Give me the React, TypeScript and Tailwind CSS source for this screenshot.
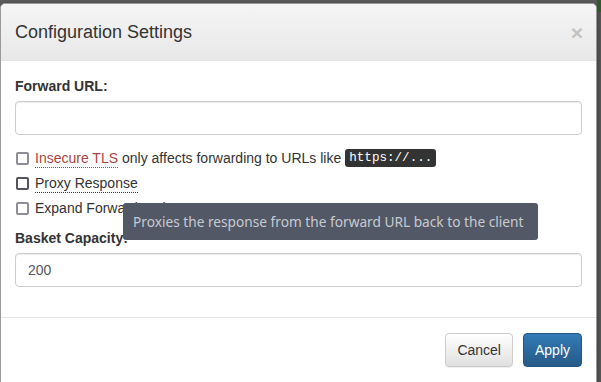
export default function App() {
  const sans = { fontFamily: '"Liberation Sans", Arial, sans-serif' };
  return (
    <div className="relative w-[601px] h-[382px] overflow-hidden bg-[#5e5e5e]" style={sans}>
      {/* backdrop bits */}
      <div className="absolute right-0 top-0 w-[4px] h-[12px] bg-[#2f5a2c]" />

      <div className="mt-[3px] w-[597px] rounded-t-[5px] border border-[#999] bg-white text-[14px] leading-[20px] text-[#333] shadow-[0_3px_9px_rgba(0,0,0,0.5)]">
        {/* header */}
        <div className="flex items-center justify-between rounded-t-[5px] border-b border-[#e5e5e5] bg-gradient-to-b from-[#f5f5f5] to-[#e8e8e8] px-[14px] py-[15px]">
          <h4 className="text-[18px] leading-[26px] text-[#333]">Configuration Settings</h4>
          <span className="text-[21px] font-bold leading-none text-[#c2c2c2] mr-[-1px]">×</span>
        </div>

        {/* body */}
        <div className="px-[14px] pt-[15px] pb-[15px]">
          <label className="mb-[5px] block font-bold">Forward URL:</label>
          <div className="h-[34px] rounded-[4px] border border-[#ccc] shadow-[inset_0_1px_1px_rgba(0,0,0,0.075)]" />

          <div className="mt-[13px] flex items-center h-[20px]">
            <span className="ml-[1px] mr-[6px] h-[13px] w-[13px] rounded-[2px] border-2 border-[#8e8e99]" />
            <span className="text-[#a94442] border-b border-dotted border-[#a94442] leading-[18px]">Insecure TLS</span>
            <span className="ml-[4px]">only affects forwarding to URLs like</span>
            <code
              className="ml-[4px] rounded-[3px] bg-[#333] px-[4px] py-[1px] text-[12.6px] leading-[16px] text-white"
              style={{ fontFamily: '"Liberation Mono", monospace' }}
            >
              https://...
            </code>
          </div>
          <div className="mt-[5px] flex items-center h-[20px]">
            <span className="ml-[1px] mr-[6px] h-[13px] w-[13px] rounded-[2px] border-2 border-[#55555e]" />
            <span className="border-b border-dotted border-[#333] leading-[18px]">Proxy Response</span>
          </div>
          <div className="mt-[5px] flex items-center h-[20px]">
            <span className="ml-[1px] mr-[6px] h-[13px] w-[13px] rounded-[2px] border-2 border-[#8e8e99]" />
            <span>Expand Forward Path</span>
          </div>

          <label className="mt-[10px] mb-[5px] block font-bold">Basket Capacity:</label>
          <div className="flex h-[34px] items-center rounded-[4px] border border-[#ccc] px-[12px] text-[#555] shadow-[inset_0_1px_1px_rgba(0,0,0,0.075)]">
            200
          </div>
          <div className="h-[15px]" />
        </div>

        {/* footer */}
        <div className="flex justify-end gap-[10px] border-t border-[#e5e5e5] px-[14px] py-[15px]">
          <button className="h-[34px] rounded-[4px] border border-[#ccc] bg-gradient-to-b from-white to-[#e0e0e0] px-[11px] text-[14px] text-[#333] shadow-[0_1px_1px_rgba(0,0,0,0.075)]">
            Cancel
          </button>
          <button className="h-[34px] rounded-[4px] border border-[#245580] bg-gradient-to-b from-[#337ab7] to-[#265a88] px-[11px] text-[14px] text-white">
            Apply
          </button>
        </div>
        <div className="h-[20px]" />
      </div>

      {/* tooltip */}
      <div
        className="absolute left-[123px] top-[203px] w-[415px] h-[37px] whitespace-nowrap rounded-[3px] bg-[#525866] px-[10px] text-[13.7px] leading-[37px] text-[#c7cad1]"
        style={{ fontFamily: '"Noto Sans", sans-serif' }}
      >
        Proxies the response from the forward URL back to the client
      </div>
    </div>
  );
}
